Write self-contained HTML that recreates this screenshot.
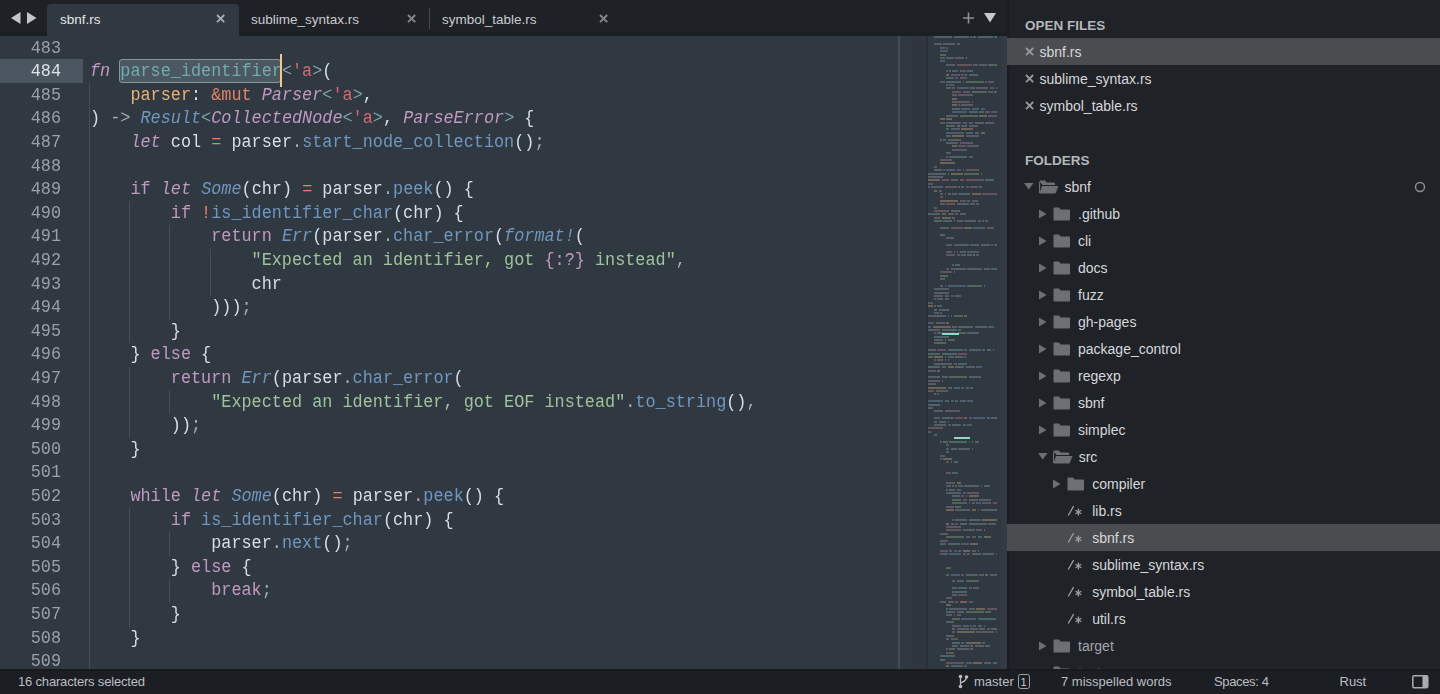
<!DOCTYPE html>
<html><head><meta charset="utf-8"><style>
*{box-sizing:border-box}
html,body{margin:0;padding:0}
body{width:1440px;height:694px;overflow:hidden;position:relative;background:#1f2227;font-family:"Liberation Sans",sans-serif}
.a{position:absolute}
.t{position:absolute;white-space:pre;line-height:20px}
#tabbar{position:absolute;left:0;top:0;width:1007px;height:36px;background:#1e2126}
#editor{position:absolute;left:0;top:36px;width:1007px;height:633px;background:#303841;overflow:hidden}
.ln{position:absolute;left:0;width:61px;text-align:right;font-family:"Liberation Mono",monospace;white-space:pre;transform:scaleY(1.06);transform-origin:0 16.3px}
.cl{position:absolute;white-space:pre;font-family:"Liberation Mono",monospace;color:#d8dee9;transform:scaleY(1.06);transform-origin:0 16.3px}
.cl i{font-style:italic}
.ig{position:absolute;width:1px;background:#454e58}
#sidebar{position:absolute;left:1007px;top:0;width:433px;height:669px;background:#1f2227;overflow:hidden}
.sb{position:absolute;white-space:pre;font-size:14px;line-height:20px;color:#d6d8db}
.mm{position:absolute;height:1.5px;opacity:.42}
#status{position:absolute;left:0;top:669px;width:1440px;height:25px;background:#1b1e22;color:#bcbfc3;font-size:13px}
</style></head><body>

<div id="tabbar">
<svg class="a" style="left:0;top:0" width="47" height="35"><path d="M20.5 12 L11 18 L20.5 24Z" fill="#c3c6ca"/><path d="M27 12 L36.5 18 L27 24Z" fill="#c3c6ca"/></svg>
<div class="a" style="left:0;top:32px;width:1007px;height:4px;background:#1a1f22"></div>
<div class="a" style="left:47px;top:4px;width:192px;height:32px;background:#303841;border-radius:4px 4px 0 0"></div>
<div class="t" style="left:60px;top:10px;font-size:13.5px;color:#e4e6e9">sbnf.rs</div>
<svg class="a" style="left:216.4px;top:13.9px" width="9" height="9"><path d="M1 1 L8.2 8.2 M8.2 1 L1 8.2" stroke="#a9acb0" stroke-width="1.9" fill="none"/></svg>
<div class="t" style="left:251px;top:10px;font-size:13.5px;color:#c9ccd0">sublime_syntax.rs</div>
<svg class="a" style="left:407.4px;top:13.9px" width="9" height="9"><path d="M1 1 L8.2 8.2 M8.2 1 L1 8.2" stroke="#84878c" stroke-width="1.9" fill="none"/></svg>
<div class="a" style="left:429px;top:8px;width:1.3px;height:21px;background:#45494f"></div>
<div class="t" style="left:442px;top:10px;font-size:13.5px;color:#c9ccd0">symbol_table.rs</div>
<svg class="a" style="left:598.9px;top:13.9px" width="9" height="9"><path d="M1 1 L8.2 8.2 M8.2 1 L1 8.2" stroke="#84878c" stroke-width="1.9" fill="none"/></svg>
<svg class="a" style="left:962px;top:12px" width="13" height="12"><path d="M6.5 0.5 V11.5 M1 6 H12" stroke="#8c8f94" stroke-width="1.6" fill="none"/></svg>
<svg class="a" style="left:984px;top:13px" width="12" height="10"><path d="M0 0 H12 L6 9.5Z" fill="#c6c9cd"/></svg>
</div>
<div id="editor">
<div class="a" style="left:0;top:23.10px;width:83px;height:23.60px;background:#4b5661"></div>
<div class="ln" style="top:0.60px;height:23.60px;line-height:23.60px;font-size:16.83px;color:#99a0a8">483</div>
<div class="ln" style="top:24.20px;height:23.60px;line-height:23.60px;font-size:16.83px;color:#dfe3ea">484</div>
<div class="ln" style="top:47.80px;height:23.60px;line-height:23.60px;font-size:16.83px;color:#99a0a8">485</div>
<div class="ig" style="left:88.5px;top:47.30px;height:24.20px"></div>
<div class="ln" style="top:71.40px;height:23.60px;line-height:23.60px;font-size:16.83px;color:#99a0a8">486</div>
<div class="ig" style="left:88.5px;top:70.90px;height:24.20px"></div>
<div class="ln" style="top:95.00px;height:23.60px;line-height:23.60px;font-size:16.83px;color:#99a0a8">487</div>
<div class="ig" style="left:88.5px;top:94.50px;height:24.20px"></div>
<div class="ln" style="top:118.60px;height:23.60px;line-height:23.60px;font-size:16.83px;color:#99a0a8">488</div>
<div class="ig" style="left:88.5px;top:118.10px;height:24.20px"></div>
<div class="ln" style="top:142.20px;height:23.60px;line-height:23.60px;font-size:16.83px;color:#99a0a8">489</div>
<div class="ig" style="left:88.5px;top:141.70px;height:24.20px"></div>
<div class="ln" style="top:165.80px;height:23.60px;line-height:23.60px;font-size:16.83px;color:#99a0a8">490</div>
<div class="ig" style="left:88.5px;top:165.30px;height:24.20px"></div>
<div class="ig" style="left:128.9px;top:165.30px;height:24.20px"></div>
<div class="ln" style="top:189.40px;height:23.60px;line-height:23.60px;font-size:16.83px;color:#99a0a8">491</div>
<div class="ig" style="left:88.5px;top:188.90px;height:24.20px"></div>
<div class="ig" style="left:128.9px;top:188.90px;height:24.20px"></div>
<div class="ig" style="left:169.3px;top:188.90px;height:24.20px"></div>
<div class="ln" style="top:213.00px;height:23.60px;line-height:23.60px;font-size:16.83px;color:#99a0a8">492</div>
<div class="ig" style="left:88.5px;top:212.50px;height:24.20px"></div>
<div class="ig" style="left:128.9px;top:212.50px;height:24.20px"></div>
<div class="ig" style="left:169.3px;top:212.50px;height:24.20px"></div>
<div class="ig" style="left:209.7px;top:212.50px;height:24.20px"></div>
<div class="ln" style="top:236.60px;height:23.60px;line-height:23.60px;font-size:16.83px;color:#99a0a8">493</div>
<div class="ig" style="left:88.5px;top:236.10px;height:24.20px"></div>
<div class="ig" style="left:128.9px;top:236.10px;height:24.20px"></div>
<div class="ig" style="left:169.3px;top:236.10px;height:24.20px"></div>
<div class="ig" style="left:209.7px;top:236.10px;height:24.20px"></div>
<div class="ln" style="top:260.20px;height:23.60px;line-height:23.60px;font-size:16.83px;color:#99a0a8">494</div>
<div class="ig" style="left:88.5px;top:259.70px;height:24.20px"></div>
<div class="ig" style="left:128.9px;top:259.70px;height:24.20px"></div>
<div class="ig" style="left:169.3px;top:259.70px;height:24.20px"></div>
<div class="ln" style="top:283.80px;height:23.60px;line-height:23.60px;font-size:16.83px;color:#99a0a8">495</div>
<div class="ig" style="left:88.5px;top:283.30px;height:24.20px"></div>
<div class="ig" style="left:128.9px;top:283.30px;height:24.20px"></div>
<div class="ln" style="top:307.40px;height:23.60px;line-height:23.60px;font-size:16.83px;color:#99a0a8">496</div>
<div class="ig" style="left:88.5px;top:306.90px;height:24.20px"></div>
<div class="ln" style="top:331.00px;height:23.60px;line-height:23.60px;font-size:16.83px;color:#99a0a8">497</div>
<div class="ig" style="left:88.5px;top:330.50px;height:24.20px"></div>
<div class="ig" style="left:128.9px;top:330.50px;height:24.20px"></div>
<div class="ln" style="top:354.60px;height:23.60px;line-height:23.60px;font-size:16.83px;color:#99a0a8">498</div>
<div class="ig" style="left:88.5px;top:354.10px;height:24.20px"></div>
<div class="ig" style="left:128.9px;top:354.10px;height:24.20px"></div>
<div class="ig" style="left:169.3px;top:354.10px;height:24.20px"></div>
<div class="ln" style="top:378.20px;height:23.60px;line-height:23.60px;font-size:16.83px;color:#99a0a8">499</div>
<div class="ig" style="left:88.5px;top:377.70px;height:24.20px"></div>
<div class="ig" style="left:128.9px;top:377.70px;height:24.20px"></div>
<div class="ln" style="top:401.80px;height:23.60px;line-height:23.60px;font-size:16.83px;color:#99a0a8">500</div>
<div class="ig" style="left:88.5px;top:401.30px;height:24.20px"></div>
<div class="ln" style="top:425.40px;height:23.60px;line-height:23.60px;font-size:16.83px;color:#99a0a8">501</div>
<div class="ig" style="left:88.5px;top:424.90px;height:24.20px"></div>
<div class="ln" style="top:449.00px;height:23.60px;line-height:23.60px;font-size:16.83px;color:#99a0a8">502</div>
<div class="ig" style="left:88.5px;top:448.50px;height:24.20px"></div>
<div class="ln" style="top:472.60px;height:23.60px;line-height:23.60px;font-size:16.83px;color:#99a0a8">503</div>
<div class="ig" style="left:88.5px;top:472.10px;height:24.20px"></div>
<div class="ig" style="left:128.9px;top:472.10px;height:24.20px"></div>
<div class="ln" style="top:496.20px;height:23.60px;line-height:23.60px;font-size:16.83px;color:#99a0a8">504</div>
<div class="ig" style="left:88.5px;top:495.70px;height:24.20px"></div>
<div class="ig" style="left:128.9px;top:495.70px;height:24.20px"></div>
<div class="ig" style="left:169.3px;top:495.70px;height:24.20px"></div>
<div class="ln" style="top:519.80px;height:23.60px;line-height:23.60px;font-size:16.83px;color:#99a0a8">505</div>
<div class="ig" style="left:88.5px;top:519.30px;height:24.20px"></div>
<div class="ig" style="left:128.9px;top:519.30px;height:24.20px"></div>
<div class="ln" style="top:543.40px;height:23.60px;line-height:23.60px;font-size:16.83px;color:#99a0a8">506</div>
<div class="ig" style="left:88.5px;top:542.90px;height:24.20px"></div>
<div class="ig" style="left:128.9px;top:542.90px;height:24.20px"></div>
<div class="ig" style="left:169.3px;top:542.90px;height:24.20px"></div>
<div class="ln" style="top:567.00px;height:23.60px;line-height:23.60px;font-size:16.83px;color:#99a0a8">507</div>
<div class="ig" style="left:88.5px;top:566.50px;height:24.20px"></div>
<div class="ig" style="left:128.9px;top:566.50px;height:24.20px"></div>
<div class="ln" style="top:590.60px;height:23.60px;line-height:23.60px;font-size:16.83px;color:#99a0a8">508</div>
<div class="ig" style="left:88.5px;top:590.10px;height:24.20px"></div>
<div class="ln" style="top:614.20px;height:23.60px;line-height:23.60px;font-size:16.83px;color:#99a0a8">509</div>
<div class="ig" style="left:88.5px;top:613.70px;height:24.20px"></div>
<div class="a" style="left:119px;top:22.5px;width:162px;height:24px;background:#4c5761;border:1px solid #84999d;border-radius:3px"></div>
<div class="cl" style="left:90px;top:0.60px;height:23.60px;line-height:23.60px;font-size:16.83px"></div>
<div class="cl" style="left:90px;top:24.20px;height:23.60px;line-height:23.60px;font-size:16.83px"><i style="color:#c099c0">fn</i> <span style="color:#6caeae">parse_identifier</span><span style="color:#7ba5a7">&lt;</span><span style="color:#d6686e">&#x27;a</span><span style="color:#7ba5a7">&gt;</span>(</div>
<div class="cl" style="left:90px;top:47.80px;height:23.60px;line-height:23.60px;font-size:16.83px">    <span style="color:#ebb16e">parser</span>: <span style="color:#e58267">&amp;mut</span> <i style="color:#c099c0">Parser</i><span style="color:#7ba5a7">&lt;</span><span style="color:#d6686e">&#x27;a</span><span style="color:#7ba5a7">&gt;</span>,</div>
<div class="cl" style="left:90px;top:71.40px;height:23.60px;line-height:23.60px;font-size:16.83px">) <span style="color:#a6acb9">-&gt;</span> <i style="color:#6f97bf">Result</i><span style="color:#7ba5a7">&lt;</span><i style="color:#c099c0">CollectedNode</i><span style="color:#7ba5a7">&lt;</span><span style="color:#d6686e">&#x27;a</span><span style="color:#7ba5a7">&gt;</span>, <i style="color:#c099c0">ParseError</i><span style="color:#7ba5a7">&gt;</span> {</div>
<div class="cl" style="left:90px;top:95.00px;height:23.60px;line-height:23.60px;font-size:16.83px">    <i style="color:#c099c0">let</i> col <span style="color:#e58267">=</span> parser<span style="color:#a6acb9">.</span><span style="color:#6f97bf">start_node_collection</span>()<span style="color:#a6acb9">;</span></div>
<div class="cl" style="left:90px;top:118.60px;height:23.60px;line-height:23.60px;font-size:16.83px"></div>
<div class="cl" style="left:90px;top:142.20px;height:23.60px;line-height:23.60px;font-size:16.83px">    <span style="color:#c099c0">if</span> <i style="color:#c099c0">let</i> <i style="color:#6f97bf">Some</i>(chr) <span style="color:#e58267">=</span> parser<span style="color:#a6acb9">.</span><span style="color:#6f97bf">peek</span>() {</div>
<div class="cl" style="left:90px;top:165.80px;height:23.60px;line-height:23.60px;font-size:16.83px">        <span style="color:#c099c0">if</span> <span style="color:#e58267">!</span><span style="color:#6f97bf">is_identifier_char</span>(chr) {</div>
<div class="cl" style="left:90px;top:189.40px;height:23.60px;line-height:23.60px;font-size:16.83px">            <span style="color:#c099c0">return</span> <i style="color:#6f97bf">Err</i>(parser<span style="color:#a6acb9">.</span><span style="color:#6f97bf">char_error</span>(<i style="color:#6f97bf">format!</i>(</div>
<div class="cl" style="left:90px;top:213.00px;height:23.60px;line-height:23.60px;font-size:16.83px">                <span style="color:#9fc39b">&quot;Expected an identifier, got </span><span style="color:#c099c0">{:?}</span><span style="color:#9fc39b"> instead&quot;</span><span style="color:#a6acb9">,</span></div>
<div class="cl" style="left:90px;top:236.60px;height:23.60px;line-height:23.60px;font-size:16.83px">                chr</div>
<div class="cl" style="left:90px;top:260.20px;height:23.60px;line-height:23.60px;font-size:16.83px">            )))<span style="color:#a6acb9">;</span></div>
<div class="cl" style="left:90px;top:283.80px;height:23.60px;line-height:23.60px;font-size:16.83px">        }</div>
<div class="cl" style="left:90px;top:307.40px;height:23.60px;line-height:23.60px;font-size:16.83px">    } <span style="color:#c099c0">else</span> {</div>
<div class="cl" style="left:90px;top:331.00px;height:23.60px;line-height:23.60px;font-size:16.83px">        <span style="color:#c099c0">return</span> <i style="color:#6f97bf">Err</i>(parser<span style="color:#a6acb9">.</span><span style="color:#6f97bf">char_error</span>(</div>
<div class="cl" style="left:90px;top:354.60px;height:23.60px;line-height:23.60px;font-size:16.83px">            <span style="color:#9fc39b">&quot;Expected an identifier, got EOF instead&quot;</span><span style="color:#a6acb9">.</span><span style="color:#6f97bf">to_string</span>()<span style="color:#a6acb9">,</span></div>
<div class="cl" style="left:90px;top:378.20px;height:23.60px;line-height:23.60px;font-size:16.83px">        ))<span style="color:#a6acb9">;</span></div>
<div class="cl" style="left:90px;top:401.80px;height:23.60px;line-height:23.60px;font-size:16.83px">    }</div>
<div class="cl" style="left:90px;top:425.40px;height:23.60px;line-height:23.60px;font-size:16.83px"></div>
<div class="cl" style="left:90px;top:449.00px;height:23.60px;line-height:23.60px;font-size:16.83px">    <span style="color:#c099c0">while</span> <i style="color:#c099c0">let</i> <i style="color:#6f97bf">Some</i>(chr) <span style="color:#e58267">=</span> parser<span style="color:#a6acb9">.</span><span style="color:#6f97bf">peek</span>() {</div>
<div class="cl" style="left:90px;top:472.60px;height:23.60px;line-height:23.60px;font-size:16.83px">        <span style="color:#c099c0">if</span> <span style="color:#6f97bf">is_identifier_char</span>(chr) {</div>
<div class="cl" style="left:90px;top:496.20px;height:23.60px;line-height:23.60px;font-size:16.83px">            parser<span style="color:#a6acb9">.</span><span style="color:#6f97bf">next</span>()<span style="color:#a6acb9">;</span></div>
<div class="cl" style="left:90px;top:519.80px;height:23.60px;line-height:23.60px;font-size:16.83px">        } <span style="color:#c099c0">else</span> {</div>
<div class="cl" style="left:90px;top:543.40px;height:23.60px;line-height:23.60px;font-size:16.83px">            <span style="color:#c099c0">break</span><span style="color:#a6acb9">;</span></div>
<div class="cl" style="left:90px;top:567.00px;height:23.60px;line-height:23.60px;font-size:16.83px">        }</div>
<div class="cl" style="left:90px;top:590.60px;height:23.60px;line-height:23.60px;font-size:16.83px">    }</div>
<div class="cl" style="left:90px;top:614.20px;height:23.60px;line-height:23.60px;font-size:16.83px"></div>
<div class="a" style="left:280.3px;top:18px;width:2.2px;height:32.5px;background:#f2c983"></div>
<div class="a" style="left:898px;top:0;width:2px;height:633px;background:#434c56"></div>
<div class="a" style="left:912px;top:0;width:14px;height:633px;background:#2f363f"></div>
<div class="a" style="left:926px;top:0;width:2px;height:633px;background:#2a3038"></div>
<div class="a" style="left:1001px;top:0;width:5.5px;height:633px;background:#343b44"></div>
<div class="a" style="left:0;top:0;width:1007px;height:633px;filter:blur(0.45px)"><div class="mm" style="left:934.0px;top:0px;width:18.0px;background:#8a939d"></div><div class="mm" style="left:953.5px;top:0px;width:15.0px;background:#8a939d"></div><div class="mm" style="left:970.0px;top:0px;width:1.5px;background:#8a939d"></div><div class="mm" style="left:973.0px;top:0px;width:3.0px;background:#6f8fb3"></div><div class="mm" style="left:977.5px;top:0px;width:15.0px;background:#8a939d"></div><div class="mm" style="left:994.0px;top:0px;width:3.0px;background:#6fa3a3"></div><div class="mm" style="left:934.0px;top:7px;width:7.5px;background:#8a939d"></div><div class="mm" style="left:943.0px;top:7px;width:12.0px;background:#8a939d"></div><div class="mm" style="left:956.5px;top:7px;width:3.0px;background:#8a939d"></div><div class="mm" style="left:940.0px;top:11px;width:4.5px;background:#8a939d"></div><div class="mm" style="left:946.0px;top:11px;width:1.5px;background:#8a939d"></div><div class="mm" style="left:940.0px;top:14px;width:7.5px;background:#6f8fb3"></div><div class="mm" style="left:940.0px;top:18px;width:6.0px;background:#88a884"></div><div class="mm" style="left:940.0px;top:21px;width:4.5px;background:#8a939d"></div><div class="mm" style="left:946.0px;top:21px;width:7.5px;background:#8a939d"></div><div class="mm" style="left:955.0px;top:21px;width:9.0px;background:#a17fa1"></div><div class="mm" style="left:965.5px;top:21px;width:1.5px;background:#c9a070"></div><div class="mm" style="left:940.0px;top:24px;width:4.5px;background:#6f8fb3"></div><div class="mm" style="left:946.0px;top:28px;width:9.0px;background:#8a939d"></div><div class="mm" style="left:956.5px;top:28px;width:15.0px;background:#b07a7e"></div><div class="mm" style="left:973.0px;top:28px;width:4.5px;background:#8a939d"></div><div class="mm" style="left:979.0px;top:28px;width:7.5px;background:#8a939d"></div><div class="mm" style="left:988.0px;top:28px;width:9.0px;background:#88a884"></div><div class="mm" style="left:946.0px;top:34px;width:1.5px;background:#b07a7e"></div><div class="mm" style="left:949.0px;top:34px;width:1.5px;background:#8a939d"></div><div class="mm" style="left:952.0px;top:34px;width:6.0px;background:#8a939d"></div><div class="mm" style="left:959.5px;top:34px;width:6.0px;background:#b07a7e"></div><div class="mm" style="left:967.0px;top:34px;width:6.0px;background:#6fa3a3"></div><div class="mm" style="left:946.0px;top:38px;width:3.0px;background:#c9a070"></div><div class="mm" style="left:950.5px;top:38px;width:9.0px;background:#a17fa1"></div><div class="mm" style="left:961.0px;top:38px;width:1.5px;background:#88a884"></div><div class="mm" style="left:964.0px;top:38px;width:3.0px;background:#8a939d"></div><div class="mm" style="left:968.5px;top:38px;width:9.0px;background:#6fa3a3"></div><div class="mm" style="left:946.0px;top:41px;width:7.5px;background:#6fa3a3"></div><div class="mm" style="left:955.0px;top:41px;width:3.0px;background:#a17fa1"></div><div class="mm" style="left:959.5px;top:41px;width:7.5px;background:#a17fa1"></div><div class="mm" style="left:940.0px;top:45px;width:4.5px;background:#a17fa1"></div><div class="mm" style="left:946.0px;top:45px;width:15.0px;background:#8a939d"></div><div class="mm" style="left:962.5px;top:45px;width:1.5px;background:#8a939d"></div><div class="mm" style="left:965.5px;top:45px;width:18.0px;background:#88a884"></div><div class="mm" style="left:985.0px;top:45px;width:1.5px;background:#8a939d"></div><div class="mm" style="left:988.0px;top:45px;width:6.0px;background:#a17fa1"></div><div class="mm" style="left:946.0px;top:48px;width:1.5px;background:#8a939d"></div><div class="mm" style="left:949.0px;top:48px;width:4.5px;background:#6f8fb3"></div><div class="mm" style="left:946.0px;top:51px;width:4.5px;background:#88a884"></div><div class="mm" style="left:952.0px;top:51px;width:3.0px;background:#8a939d"></div><div class="mm" style="left:956.5px;top:51px;width:12.0px;background:#6f8fb3"></div><div class="mm" style="left:970.0px;top:51px;width:4.5px;background:#8a939d"></div><div class="mm" style="left:976.0px;top:51px;width:12.0px;background:#a17fa1"></div><div class="mm" style="left:989.5px;top:51px;width:4.5px;background:#b07a7e"></div><div class="mm" style="left:995.5px;top:51px;width:1.5px;background:#6fa3a3"></div><div class="mm" style="left:952.0px;top:55px;width:9.0px;background:#b07a7e"></div><div class="mm" style="left:962.5px;top:55px;width:7.5px;background:#a17fa1"></div><div class="mm" style="left:971.5px;top:55px;width:15.0px;background:#88a884"></div><div class="mm" style="left:988.0px;top:55px;width:4.5px;background:#8a939d"></div><div class="mm" style="left:994.0px;top:55px;width:3.0px;background:#6fa3a3"></div><div class="mm" style="left:952.0px;top:58px;width:4.5px;background:#8a939d"></div><div class="mm" style="left:958.0px;top:58px;width:15.0px;background:#a17fa1"></div><div class="mm" style="left:952.0px;top:62px;width:4.5px;background:#c9a070"></div><div class="mm" style="left:952.0px;top:65px;width:18.0px;background:#a17fa1"></div><div class="mm" style="left:971.5px;top:65px;width:1.5px;background:#a17fa1"></div><div class="mm" style="left:952.0px;top:68px;width:4.5px;background:#c9a070"></div><div class="mm" style="left:958.0px;top:68px;width:1.5px;background:#b07a7e"></div><div class="mm" style="left:961.0px;top:68px;width:12.0px;background:#a17fa1"></div><div class="mm" style="left:952.0px;top:72px;width:7.5px;background:#6fa3a3"></div><div class="mm" style="left:961.0px;top:72px;width:9.0px;background:#6f8fb3"></div><div class="mm" style="left:971.5px;top:72px;width:7.5px;background:#6f8fb3"></div><div class="mm" style="left:980.5px;top:72px;width:4.5px;background:#6f8fb3"></div><div class="mm" style="left:952.0px;top:75px;width:15.0px;background:#6f8fb3"></div><div class="mm" style="left:968.5px;top:75px;width:9.0px;background:#6fa3a3"></div><div class="mm" style="left:979.0px;top:75px;width:4.5px;background:#6fa3a3"></div><div class="mm" style="left:985.0px;top:75px;width:4.5px;background:#8a939d"></div><div class="mm" style="left:991.0px;top:75px;width:6.0px;background:#b07a7e"></div><div class="mm" style="left:946.0px;top:79px;width:12.0px;background:#8a939d"></div><div class="mm" style="left:959.5px;top:79px;width:18.0px;background:#88a884"></div><div class="mm" style="left:979.0px;top:79px;width:7.5px;background:#c9a070"></div><div class="mm" style="left:988.0px;top:79px;width:9.0px;background:#a17fa1"></div><div class="mm" style="left:940.0px;top:82px;width:4.5px;background:#c9a070"></div><div class="mm" style="left:946.0px;top:82px;width:6.0px;background:#c9a070"></div><div class="mm" style="left:940.0px;top:86px;width:4.5px;background:#8a939d"></div><div class="mm" style="left:946.0px;top:86px;width:15.0px;background:#8a939d"></div><div class="mm" style="left:962.5px;top:86px;width:4.5px;background:#8a939d"></div><div class="mm" style="left:968.5px;top:86px;width:4.5px;background:#8a939d"></div><div class="mm" style="left:974.5px;top:86px;width:9.0px;background:#8a939d"></div><div class="mm" style="left:985.0px;top:86px;width:9.0px;background:#8a939d"></div><div class="mm" style="left:946.0px;top:89px;width:9.0px;background:#88a884"></div><div class="mm" style="left:956.5px;top:89px;width:3.0px;background:#c9a070"></div><div class="mm" style="left:961.0px;top:89px;width:6.0px;background:#8a939d"></div><div class="mm" style="left:968.5px;top:89px;width:9.0px;background:#8a939d"></div><div class="mm" style="left:946.0px;top:92px;width:3.0px;background:#6fa3a3"></div><div class="mm" style="left:950.5px;top:92px;width:9.0px;background:#8a939d"></div><div class="mm" style="left:961.0px;top:92px;width:12.0px;background:#c9a070"></div><div class="mm" style="left:946.0px;top:96px;width:18.0px;background:#6f8fb3"></div><div class="mm" style="left:965.5px;top:96px;width:7.5px;background:#6f8fb3"></div><div class="mm" style="left:974.5px;top:96px;width:4.5px;background:#88a884"></div><div class="mm" style="left:980.5px;top:96px;width:4.5px;background:#c9a070"></div><div class="mm" style="left:946.0px;top:99px;width:4.5px;background:#8a939d"></div><div class="mm" style="left:952.0px;top:99px;width:12.0px;background:#c9a070"></div><div class="mm" style="left:965.5px;top:99px;width:13.5px;background:#8a939d"></div><div class="mm" style="left:940.0px;top:103px;width:1.5px;background:#88a884"></div><div class="mm" style="left:943.0px;top:103px;width:3.0px;background:#6f8fb3"></div><div class="mm" style="left:947.5px;top:103px;width:13.5px;background:#8a939d"></div><div class="mm" style="left:946.0px;top:106px;width:12.0px;background:#8a939d"></div><div class="mm" style="left:959.5px;top:106px;width:13.5px;background:#a17fa1"></div><div class="mm" style="left:952.0px;top:109px;width:4.5px;background:#c9a070"></div><div class="mm" style="left:958.0px;top:109px;width:7.5px;background:#a17fa1"></div><div class="mm" style="left:967.0px;top:109px;width:12.0px;background:#a17fa1"></div><div class="mm" style="left:952.0px;top:113px;width:15.0px;background:#a17fa1"></div><div class="mm" style="left:946.0px;top:116px;width:4.5px;background:#8a939d"></div><div class="mm" style="left:946.0px;top:120px;width:1.5px;background:#b07a7e"></div><div class="mm" style="left:949.0px;top:120px;width:18.0px;background:#6fa3a3"></div><div class="mm" style="left:968.5px;top:120px;width:4.5px;background:#8a939d"></div><div class="mm" style="left:940.0px;top:123px;width:12.0px;background:#a17fa1"></div><div class="mm" style="left:940.0px;top:126px;width:15.0px;background:#c9a070"></div><div class="mm" style="left:934.0px;top:130px;width:3.0px;background:#a17fa1"></div><div class="mm" style="left:934.0px;top:133px;width:7.5px;background:#6fa3a3"></div><div class="mm" style="left:943.0px;top:133px;width:1.5px;background:#b07a7e"></div><div class="mm" style="left:946.0px;top:133px;width:9.0px;background:#6f8fb3"></div><div class="mm" style="left:956.5px;top:133px;width:4.5px;background:#8a939d"></div><div class="mm" style="left:962.5px;top:133px;width:1.5px;background:#a17fa1"></div><div class="mm" style="left:965.5px;top:133px;width:13.5px;background:#b07a7e"></div><div class="mm" style="left:928.0px;top:137px;width:18.0px;background:#8a939d"></div><div class="mm" style="left:947.5px;top:137px;width:1.5px;background:#88a884"></div><div class="mm" style="left:950.5px;top:137px;width:12.0px;background:#c9a070"></div><div class="mm" style="left:964.0px;top:137px;width:15.0px;background:#88a884"></div><div class="mm" style="left:980.5px;top:137px;width:1.5px;background:#88a884"></div><div class="mm" style="left:928.0px;top:140px;width:15.0px;background:#8a939d"></div><div class="mm" style="left:928.0px;top:143px;width:12.0px;background:#c9a070"></div><div class="mm" style="left:941.5px;top:143px;width:7.5px;background:#b07a7e"></div><div class="mm" style="left:950.5px;top:143px;width:7.5px;background:#8a939d"></div><div class="mm" style="left:959.5px;top:143px;width:4.5px;background:#b07a7e"></div><div class="mm" style="left:965.5px;top:143px;width:18.0px;background:#b07a7e"></div><div class="mm" style="left:985.0px;top:143px;width:9.0px;background:#6fa3a3"></div><div class="mm" style="left:928.0px;top:147px;width:4.5px;background:#a17fa1"></div><div class="mm" style="left:928.0px;top:150px;width:1.5px;background:#6f8fb3"></div><div class="mm" style="left:931.0px;top:150px;width:12.0px;background:#8a939d"></div><div class="mm" style="left:944.5px;top:150px;width:12.0px;background:#b07a7e"></div><div class="mm" style="left:958.0px;top:150px;width:1.5px;background:#8a939d"></div><div class="mm" style="left:961.0px;top:150px;width:3.0px;background:#8a939d"></div><div class="mm" style="left:965.5px;top:150px;width:3.0px;background:#8a939d"></div><div class="mm" style="left:970.0px;top:150px;width:7.5px;background:#b07a7e"></div><div class="mm" style="left:979.0px;top:150px;width:3.0px;background:#8a939d"></div><div class="mm" style="left:934.0px;top:154px;width:3.0px;background:#c9a070"></div><div class="mm" style="left:938.5px;top:154px;width:3.0px;background:#8a939d"></div><div class="mm" style="left:940.0px;top:157px;width:3.0px;background:#a17fa1"></div><div class="mm" style="left:944.5px;top:157px;width:1.5px;background:#c9a070"></div><div class="mm" style="left:947.5px;top:157px;width:3.0px;background:#88a884"></div><div class="mm" style="left:952.0px;top:157px;width:4.5px;background:#8a939d"></div><div class="mm" style="left:958.0px;top:157px;width:12.0px;background:#8a939d"></div><div class="mm" style="left:971.5px;top:157px;width:9.0px;background:#c9a070"></div><div class="mm" style="left:982.0px;top:157px;width:15.0px;background:#b07a7e"></div><div class="mm" style="left:940.0px;top:160px;width:3.0px;background:#a17fa1"></div><div class="mm" style="left:940.0px;top:164px;width:18.0px;background:#c9a070"></div><div class="mm" style="left:959.5px;top:164px;width:6.0px;background:#a17fa1"></div><div class="mm" style="left:967.0px;top:164px;width:3.0px;background:#6fa3a3"></div><div class="mm" style="left:971.5px;top:164px;width:6.0px;background:#a17fa1"></div><div class="mm" style="left:940.0px;top:167px;width:4.5px;background:#8a939d"></div><div class="mm" style="left:946.0px;top:167px;width:9.0px;background:#b07a7e"></div><div class="mm" style="left:956.5px;top:167px;width:12.0px;background:#8a939d"></div><div class="mm" style="left:970.0px;top:167px;width:4.5px;background:#8a939d"></div><div class="mm" style="left:976.0px;top:167px;width:3.0px;background:#8a939d"></div><div class="mm" style="left:934.0px;top:171px;width:3.0px;background:#6fa3a3"></div><div class="mm" style="left:934.0px;top:174px;width:15.0px;background:#b07a7e"></div><div class="mm" style="left:950.5px;top:174px;width:9.0px;background:#8a939d"></div><div class="mm" style="left:928.0px;top:177px;width:12.0px;background:#8a939d"></div><div class="mm" style="left:941.5px;top:177px;width:4.5px;background:#88a884"></div><div class="mm" style="left:947.5px;top:177px;width:6.0px;background:#8a939d"></div><div class="mm" style="left:955.0px;top:177px;width:3.0px;background:#b07a7e"></div><div class="mm" style="left:959.5px;top:177px;width:6.0px;background:#8a939d"></div><div class="mm" style="left:934.0px;top:181px;width:6.0px;background:#a17fa1"></div><div class="mm" style="left:941.5px;top:181px;width:9.0px;background:#c9a070"></div><div class="mm" style="left:952.0px;top:181px;width:3.0px;background:#88a884"></div><div class="mm" style="left:934.0px;top:184px;width:7.5px;background:#88a884"></div><div class="mm" style="left:943.0px;top:184px;width:9.0px;background:#6fa3a3"></div><div class="mm" style="left:953.5px;top:184px;width:1.5px;background:#c9a070"></div><div class="mm" style="left:956.5px;top:184px;width:6.0px;background:#8a939d"></div><div class="mm" style="left:964.0px;top:184px;width:12.0px;background:#8a939d"></div><div class="mm" style="left:977.5px;top:184px;width:3.0px;background:#8a939d"></div><div class="mm" style="left:982.0px;top:184px;width:1.5px;background:#8a939d"></div><div class="mm" style="left:985.0px;top:184px;width:3.0px;background:#8a939d"></div><div class="mm" style="left:940.0px;top:191px;width:9.0px;background:#8a939d"></div><div class="mm" style="left:950.5px;top:191px;width:12.0px;background:#b07a7e"></div><div class="mm" style="left:964.0px;top:191px;width:7.5px;background:#c9a070"></div><div class="mm" style="left:973.0px;top:191px;width:12.0px;background:#6f8fb3"></div><div class="mm" style="left:986.5px;top:191px;width:7.5px;background:#b07a7e"></div><div class="mm" style="left:940.0px;top:198px;width:4.5px;background:#88a884"></div><div class="mm" style="left:946.0px;top:201px;width:7.5px;background:#a17fa1"></div><div class="mm" style="left:946.0px;top:208px;width:6.0px;background:#8a939d"></div><div class="mm" style="left:953.5px;top:208px;width:15.0px;background:#8a939d"></div><div class="mm" style="left:970.0px;top:208px;width:9.0px;background:#6f8fb3"></div><div class="mm" style="left:980.5px;top:208px;width:9.0px;background:#8a939d"></div><div class="mm" style="left:991.0px;top:208px;width:1.5px;background:#b07a7e"></div><div class="mm" style="left:994.0px;top:208px;width:3.0px;background:#8a939d"></div><div class="mm" style="left:946.0px;top:215px;width:6.0px;background:#8a939d"></div><div class="mm" style="left:953.5px;top:215px;width:1.5px;background:#8a939d"></div><div class="mm" style="left:956.5px;top:215px;width:1.5px;background:#c9a070"></div><div class="mm" style="left:959.5px;top:215px;width:6.0px;background:#8a939d"></div><div class="mm" style="left:967.0px;top:215px;width:12.0px;background:#6f8fb3"></div><div class="mm" style="left:946.0px;top:218px;width:9.0px;background:#a17fa1"></div><div class="mm" style="left:956.5px;top:218px;width:3.0px;background:#b07a7e"></div><div class="mm" style="left:961.0px;top:218px;width:4.5px;background:#8a939d"></div><div class="mm" style="left:967.0px;top:218px;width:4.5px;background:#8a939d"></div><div class="mm" style="left:973.0px;top:218px;width:1.5px;background:#c9a070"></div><div class="mm" style="left:976.0px;top:218px;width:3.0px;background:#a17fa1"></div><div class="mm" style="left:952.0px;top:228px;width:1.5px;background:#8a939d"></div><div class="mm" style="left:955.0px;top:228px;width:4.5px;background:#6fa3a3"></div><div class="mm" style="left:946.0px;top:232px;width:3.0px;background:#8a939d"></div><div class="mm" style="left:950.5px;top:232px;width:15.0px;background:#8a939d"></div><div class="mm" style="left:967.0px;top:232px;width:15.0px;background:#8a939d"></div><div class="mm" style="left:983.5px;top:232px;width:6.0px;background:#8a939d"></div><div class="mm" style="left:991.0px;top:232px;width:6.0px;background:#88a884"></div><div class="mm" style="left:940.0px;top:235px;width:12.0px;background:#b07a7e"></div><div class="mm" style="left:953.5px;top:235px;width:1.5px;background:#8a939d"></div><div class="mm" style="left:940.0px;top:239px;width:7.5px;background:#88a884"></div><div class="mm" style="left:940.0px;top:242px;width:4.5px;background:#8a939d"></div><div class="mm" style="left:940.0px;top:249px;width:3.0px;background:#8a939d"></div><div class="mm" style="left:944.5px;top:249px;width:1.5px;background:#b07a7e"></div><div class="mm" style="left:947.5px;top:249px;width:18.0px;background:#6f8fb3"></div><div class="mm" style="left:967.0px;top:249px;width:15.0px;background:#88a884"></div><div class="mm" style="left:983.5px;top:249px;width:1.5px;background:#6fa3a3"></div><div class="mm" style="left:934.0px;top:252px;width:15.0px;background:#8a939d"></div><div class="mm" style="left:934.0px;top:256px;width:15.0px;background:#8a939d"></div><div class="mm" style="left:934.0px;top:259px;width:9.0px;background:#8a939d"></div><div class="mm" style="left:944.5px;top:259px;width:4.5px;background:#6fa3a3"></div><div class="mm" style="left:950.5px;top:259px;width:3.0px;background:#b07a7e"></div><div class="mm" style="left:955.0px;top:259px;width:6.0px;background:#8a939d"></div><div class="mm" style="left:934.0px;top:262px;width:1.5px;background:#b07a7e"></div><div class="mm" style="left:937.0px;top:262px;width:6.0px;background:#8a939d"></div><div class="mm" style="left:944.5px;top:262px;width:4.5px;background:#a17fa1"></div><div class="mm" style="left:928.0px;top:266px;width:4.5px;background:#6f8fb3"></div><div class="mm" style="left:928.0px;top:269px;width:4.5px;background:#c9a070"></div><div class="mm" style="left:934.0px;top:269px;width:1.5px;background:#b07a7e"></div><div class="mm" style="left:937.0px;top:269px;width:4.5px;background:#8a939d"></div><div class="mm" style="left:934.0px;top:273px;width:3.0px;background:#88a884"></div><div class="mm" style="left:938.5px;top:273px;width:10.5px;background:#8a939d"></div><div class="mm" style="left:934.0px;top:276px;width:4.5px;background:#a17fa1"></div><div class="mm" style="left:940.0px;top:276px;width:1.5px;background:#6f8fb3"></div><div class="mm" style="left:928.0px;top:279px;width:18.0px;background:#8a939d"></div><div class="mm" style="left:947.5px;top:279px;width:1.5px;background:#8a939d"></div><div class="mm" style="left:950.5px;top:279px;width:1.5px;background:#8a939d"></div><div class="mm" style="left:953.5px;top:279px;width:9.0px;background:#88a884"></div><div class="mm" style="left:964.0px;top:279px;width:3.0px;background:#c9a070"></div><div class="mm" style="left:928.0px;top:286px;width:6.0px;background:#6f8fb3"></div><div class="mm" style="left:935.5px;top:286px;width:9.0px;background:#8a939d"></div><div class="mm" style="left:946.0px;top:286px;width:3.0px;background:#c9a070"></div><div class="mm" style="left:928.0px;top:290px;width:3.0px;background:#a17fa1"></div><div class="mm" style="left:932.5px;top:290px;width:18.0px;background:#c9a070"></div><div class="mm" style="left:952.0px;top:290px;width:4.5px;background:#8a939d"></div><div class="mm" style="left:958.0px;top:290px;width:15.0px;background:#88a884"></div><div class="mm" style="left:974.5px;top:290px;width:12.0px;background:#8a939d"></div><div class="mm" style="left:988.0px;top:290px;width:6.0px;background:#6f8fb3"></div><div class="mm" style="left:928.0px;top:293px;width:12.0px;background:#8a939d"></div><div class="mm" style="left:941.5px;top:293px;width:15.0px;background:#8a939d"></div><div class="mm" style="left:958.0px;top:293px;width:3.0px;background:#6fa3a3"></div><div class="mm" style="left:934.0px;top:296px;width:1.5px;background:#8a939d"></div><div class="mm" style="left:937.0px;top:296px;width:4.5px;background:#88a884"></div><div class="mm" style="left:943.0px;top:296px;width:1.5px;background:#8a939d"></div><div class="mm" style="left:946.0px;top:296px;width:1.5px;background:#8a939d"></div><div class="mm" style="left:949.0px;top:296px;width:6.0px;background:#b07a7e"></div><div class="mm" style="left:956.5px;top:296px;width:9.0px;background:#88a884"></div><div class="mm" style="left:967.0px;top:296px;width:12.0px;background:#8a939d"></div><div class="mm" style="left:934.0px;top:300px;width:15.0px;background:#6fa3a3"></div><div class="mm" style="left:934.0px;top:303px;width:9.0px;background:#8a939d"></div><div class="mm" style="left:944.5px;top:303px;width:1.5px;background:#c9a070"></div><div class="mm" style="left:947.5px;top:303px;width:7.5px;background:#88a884"></div><div class="mm" style="left:934.0px;top:306px;width:12.0px;background:#88a884"></div><div class="mm" style="left:928.0px;top:313px;width:7.5px;background:#8a939d"></div><div class="mm" style="left:937.0px;top:313px;width:9.0px;background:#b07a7e"></div><div class="mm" style="left:947.5px;top:313px;width:15.0px;background:#6fa3a3"></div><div class="mm" style="left:964.0px;top:313px;width:3.0px;background:#8a939d"></div><div class="mm" style="left:968.5px;top:313px;width:12.0px;background:#8a939d"></div><div class="mm" style="left:982.0px;top:313px;width:3.0px;background:#6fa3a3"></div><div class="mm" style="left:986.5px;top:313px;width:4.5px;background:#88a884"></div><div class="mm" style="left:992.5px;top:313px;width:1.5px;background:#6f8fb3"></div><div class="mm" style="left:928.0px;top:317px;width:12.0px;background:#6fa3a3"></div><div class="mm" style="left:941.5px;top:317px;width:15.0px;background:#6fa3a3"></div><div class="mm" style="left:958.0px;top:317px;width:9.0px;background:#b07a7e"></div><div class="mm" style="left:928.0px;top:320px;width:4.5px;background:#88a884"></div><div class="mm" style="left:934.0px;top:320px;width:9.0px;background:#c9a070"></div><div class="mm" style="left:944.5px;top:320px;width:1.5px;background:#6fa3a3"></div><div class="mm" style="left:947.5px;top:320px;width:6.0px;background:#a17fa1"></div><div class="mm" style="left:955.0px;top:320px;width:7.5px;background:#8a939d"></div><div class="mm" style="left:964.0px;top:320px;width:1.5px;background:#8a939d"></div><div class="mm" style="left:934.0px;top:323px;width:1.5px;background:#a17fa1"></div><div class="mm" style="left:937.0px;top:323px;width:6.0px;background:#8a939d"></div><div class="mm" style="left:944.5px;top:323px;width:1.5px;background:#8a939d"></div><div class="mm" style="left:947.5px;top:323px;width:1.5px;background:#6f8fb3"></div><div class="mm" style="left:934.0px;top:327px;width:18.0px;background:#8a939d"></div><div class="mm" style="left:953.5px;top:327px;width:3.0px;background:#8a939d"></div><div class="mm" style="left:958.0px;top:327px;width:9.0px;background:#6fa3a3"></div><div class="mm" style="left:928.0px;top:330px;width:12.0px;background:#88a884"></div><div class="mm" style="left:941.5px;top:330px;width:4.5px;background:#6fa3a3"></div><div class="mm" style="left:947.5px;top:330px;width:6.0px;background:#c9a070"></div><div class="mm" style="left:955.0px;top:330px;width:9.0px;background:#88a884"></div><div class="mm" style="left:965.5px;top:330px;width:9.0px;background:#8a939d"></div><div class="mm" style="left:976.0px;top:330px;width:6.0px;background:#6f8fb3"></div><div class="mm" style="left:928.0px;top:334px;width:7.5px;background:#a17fa1"></div><div class="mm" style="left:937.0px;top:334px;width:3.0px;background:#c9a070"></div><div class="mm" style="left:928.0px;top:340px;width:12.0px;background:#8a939d"></div><div class="mm" style="left:941.5px;top:340px;width:6.0px;background:#8a939d"></div><div class="mm" style="left:949.0px;top:340px;width:18.0px;background:#88a884"></div><div class="mm" style="left:968.5px;top:340px;width:12.0px;background:#8a939d"></div><div class="mm" style="left:928.0px;top:344px;width:12.0px;background:#a17fa1"></div><div class="mm" style="left:941.5px;top:344px;width:1.5px;background:#c9a070"></div><div class="mm" style="left:928.0px;top:347px;width:7.5px;background:#8a939d"></div><div class="mm" style="left:928.0px;top:351px;width:18.0px;background:#c9a070"></div><div class="mm" style="left:947.5px;top:351px;width:4.5px;background:#88a884"></div><div class="mm" style="left:953.5px;top:351px;width:6.0px;background:#6f8fb3"></div><div class="mm" style="left:961.0px;top:351px;width:3.0px;background:#6f8fb3"></div><div class="mm" style="left:965.5px;top:351px;width:3.0px;background:#8a939d"></div><div class="mm" style="left:970.0px;top:351px;width:3.0px;background:#8a939d"></div><div class="mm" style="left:928.0px;top:354px;width:6.0px;background:#b07a7e"></div><div class="mm" style="left:935.5px;top:354px;width:12.0px;background:#8a939d"></div><div class="mm" style="left:934.0px;top:357px;width:1.5px;background:#8a939d"></div><div class="mm" style="left:937.0px;top:357px;width:1.5px;background:#8a939d"></div><div class="mm" style="left:928.0px;top:364px;width:15.0px;background:#6f8fb3"></div><div class="mm" style="left:944.5px;top:364px;width:4.5px;background:#6fa3a3"></div><div class="mm" style="left:950.5px;top:364px;width:3.0px;background:#6f8fb3"></div><div class="mm" style="left:955.0px;top:364px;width:3.0px;background:#8a939d"></div><div class="mm" style="left:959.5px;top:364px;width:6.0px;background:#8a939d"></div><div class="mm" style="left:967.0px;top:364px;width:6.0px;background:#6f8fb3"></div><div class="mm" style="left:928.0px;top:368px;width:12.0px;background:#6fa3a3"></div><div class="mm" style="left:928.0px;top:371px;width:4.5px;background:#8a939d"></div><div class="mm" style="left:934.0px;top:374px;width:9.0px;background:#8a939d"></div><div class="mm" style="left:944.5px;top:374px;width:15.0px;background:#a17fa1"></div><div class="mm" style="left:934.0px;top:381px;width:6.0px;background:#6f8fb3"></div><div class="mm" style="left:941.5px;top:381px;width:12.0px;background:#8a939d"></div><div class="mm" style="left:955.0px;top:381px;width:7.5px;background:#b07a7e"></div><div class="mm" style="left:964.0px;top:381px;width:3.0px;background:#c9a070"></div><div class="mm" style="left:968.5px;top:381px;width:3.0px;background:#a17fa1"></div><div class="mm" style="left:973.0px;top:381px;width:12.0px;background:#6f8fb3"></div><div class="mm" style="left:986.5px;top:381px;width:3.0px;background:#6fa3a3"></div><div class="mm" style="left:991.0px;top:381px;width:6.0px;background:#8a939d"></div><div class="mm" style="left:934.0px;top:385px;width:3.0px;background:#8a939d"></div><div class="mm" style="left:938.5px;top:385px;width:7.5px;background:#8a939d"></div><div class="mm" style="left:947.5px;top:385px;width:1.5px;background:#b07a7e"></div><div class="mm" style="left:934.0px;top:388px;width:12.0px;background:#8a939d"></div><div class="mm" style="left:947.5px;top:388px;width:3.0px;background:#b07a7e"></div><div class="mm" style="left:952.0px;top:388px;width:9.0px;background:#8a939d"></div><div class="mm" style="left:962.5px;top:388px;width:3.0px;background:#8a939d"></div><div class="mm" style="left:967.0px;top:388px;width:4.5px;background:#6f8fb3"></div><div class="mm" style="left:928.0px;top:391px;width:15.0px;background:#b07a7e"></div><div class="mm" style="left:928.0px;top:395px;width:3.0px;background:#8a939d"></div><div class="mm" style="left:934.0px;top:398px;width:3.0px;background:#6fa3a3"></div><div class="mm" style="left:940.0px;top:405px;width:1.5px;background:#8a939d"></div><div class="mm" style="left:943.0px;top:405px;width:4.5px;background:#88a884"></div><div class="mm" style="left:949.0px;top:405px;width:18.0px;background:#88a884"></div><div class="mm" style="left:968.5px;top:405px;width:1.5px;background:#8a939d"></div><div class="mm" style="left:971.5px;top:405px;width:1.5px;background:#88a884"></div><div class="mm" style="left:974.5px;top:405px;width:4.5px;background:#88a884"></div><div class="mm" style="left:946.0px;top:408px;width:3.0px;background:#6f8fb3"></div><div class="mm" style="left:946.0px;top:412px;width:3.0px;background:#6f8fb3"></div><div class="mm" style="left:950.5px;top:412px;width:6.0px;background:#88a884"></div><div class="mm" style="left:958.0px;top:412px;width:12.0px;background:#8a939d"></div><div class="mm" style="left:971.5px;top:412px;width:1.5px;background:#8a939d"></div><div class="mm" style="left:946.0px;top:415px;width:3.0px;background:#8a939d"></div><div class="mm" style="left:940.0px;top:419px;width:4.5px;background:#8a939d"></div><div class="mm" style="left:940.0px;top:422px;width:1.5px;background:#b07a7e"></div><div class="mm" style="left:943.0px;top:422px;width:9.0px;background:#c9a070"></div><div class="mm" style="left:946.0px;top:425px;width:3.0px;background:#6f8fb3"></div><div class="mm" style="left:950.5px;top:425px;width:1.5px;background:#8a939d"></div><div class="mm" style="left:953.5px;top:425px;width:4.5px;background:#88a884"></div><div class="mm" style="left:946.0px;top:436px;width:4.5px;background:#a17fa1"></div><div class="mm" style="left:952.0px;top:436px;width:6.0px;background:#6fa3a3"></div><div class="mm" style="left:946.0px;top:446px;width:9.0px;background:#b07a7e"></div><div class="mm" style="left:956.5px;top:446px;width:4.5px;background:#c9a070"></div><div class="mm" style="left:946.0px;top:449px;width:4.5px;background:#a17fa1"></div><div class="mm" style="left:952.0px;top:449px;width:1.5px;background:#6fa3a3"></div><div class="mm" style="left:955.0px;top:449px;width:1.5px;background:#88a884"></div><div class="mm" style="left:958.0px;top:449px;width:4.5px;background:#8a939d"></div><div class="mm" style="left:964.0px;top:449px;width:15.0px;background:#8a939d"></div><div class="mm" style="left:980.5px;top:449px;width:1.5px;background:#8a939d"></div><div class="mm" style="left:983.5px;top:449px;width:6.0px;background:#88a884"></div><div class="mm" style="left:946.0px;top:453px;width:1.5px;background:#6fa3a3"></div><div class="mm" style="left:949.0px;top:453px;width:6.0px;background:#8a939d"></div><div class="mm" style="left:956.5px;top:453px;width:4.5px;background:#6f8fb3"></div><div class="mm" style="left:946.0px;top:456px;width:15.0px;background:#8a939d"></div><div class="mm" style="left:962.5px;top:456px;width:3.0px;background:#6f8fb3"></div><div class="mm" style="left:967.0px;top:456px;width:12.0px;background:#a17fa1"></div><div class="mm" style="left:952.0px;top:459px;width:7.5px;background:#8a939d"></div><div class="mm" style="left:961.0px;top:459px;width:3.0px;background:#b07a7e"></div><div class="mm" style="left:965.5px;top:459px;width:1.5px;background:#8a939d"></div><div class="mm" style="left:968.5px;top:459px;width:10.5px;background:#c9a070"></div><div class="mm" style="left:952.0px;top:463px;width:9.0px;background:#88a884"></div><div class="mm" style="left:962.5px;top:463px;width:4.5px;background:#b07a7e"></div><div class="mm" style="left:968.5px;top:463px;width:9.0px;background:#8a939d"></div><div class="mm" style="left:979.0px;top:463px;width:12.0px;background:#8a939d"></div><div class="mm" style="left:952.0px;top:466px;width:15.0px;background:#8a939d"></div><div class="mm" style="left:968.5px;top:466px;width:1.5px;background:#8a939d"></div><div class="mm" style="left:971.5px;top:466px;width:3.0px;background:#6f8fb3"></div><div class="mm" style="left:976.0px;top:466px;width:4.5px;background:#6f8fb3"></div><div class="mm" style="left:982.0px;top:466px;width:9.0px;background:#a17fa1"></div><div class="mm" style="left:992.5px;top:466px;width:4.5px;background:#b07a7e"></div><div class="mm" style="left:946.0px;top:470px;width:7.5px;background:#8a939d"></div><div class="mm" style="left:955.0px;top:470px;width:6.0px;background:#88a884"></div><div class="mm" style="left:946.0px;top:473px;width:7.5px;background:#c9a070"></div><div class="mm" style="left:955.0px;top:473px;width:15.0px;background:#8a939d"></div><div class="mm" style="left:971.5px;top:473px;width:4.5px;background:#c9a070"></div><div class="mm" style="left:977.5px;top:473px;width:1.5px;background:#6f8fb3"></div><div class="mm" style="left:980.5px;top:473px;width:16.5px;background:#8a939d"></div><div class="mm" style="left:952.0px;top:483px;width:1.5px;background:#8a939d"></div><div class="mm" style="left:955.0px;top:483px;width:12.0px;background:#8a939d"></div><div class="mm" style="left:968.5px;top:483px;width:12.0px;background:#6fa3a3"></div><div class="mm" style="left:982.0px;top:483px;width:15.0px;background:#c9a070"></div><div class="mm" style="left:946.0px;top:487px;width:3.0px;background:#c9a070"></div><div class="mm" style="left:950.5px;top:487px;width:3.0px;background:#8a939d"></div><div class="mm" style="left:955.0px;top:487px;width:3.0px;background:#b07a7e"></div><div class="mm" style="left:959.5px;top:487px;width:7.5px;background:#6fa3a3"></div><div class="mm" style="left:968.5px;top:487px;width:18.0px;background:#8a939d"></div><div class="mm" style="left:988.0px;top:487px;width:7.5px;background:#8a939d"></div><div class="mm" style="left:946.0px;top:490px;width:15.0px;background:#a17fa1"></div><div class="mm" style="left:946.0px;top:493px;width:15.0px;background:#b07a7e"></div><div class="mm" style="left:962.5px;top:493px;width:12.0px;background:#8a939d"></div><div class="mm" style="left:976.0px;top:493px;width:6.0px;background:#a17fa1"></div><div class="mm" style="left:983.5px;top:493px;width:1.5px;background:#c9a070"></div><div class="mm" style="left:940.0px;top:497px;width:7.5px;background:#8a939d"></div><div class="mm" style="left:946.0px;top:500px;width:18.0px;background:#88a884"></div><div class="mm" style="left:965.5px;top:500px;width:4.5px;background:#8a939d"></div><div class="mm" style="left:971.5px;top:500px;width:4.5px;background:#b07a7e"></div><div class="mm" style="left:977.5px;top:500px;width:4.5px;background:#6fa3a3"></div><div class="mm" style="left:983.5px;top:500px;width:7.5px;background:#c9a070"></div><div class="mm" style="left:940.0px;top:504px;width:7.5px;background:#a17fa1"></div><div class="mm" style="left:940.0px;top:507px;width:6.0px;background:#8a939d"></div><div class="mm" style="left:947.5px;top:507px;width:12.0px;background:#6fa3a3"></div><div class="mm" style="left:961.0px;top:507px;width:7.5px;background:#6f8fb3"></div><div class="mm" style="left:970.0px;top:507px;width:7.5px;background:#c9a070"></div><div class="mm" style="left:940.0px;top:514px;width:7.5px;background:#b07a7e"></div><div class="mm" style="left:949.0px;top:514px;width:3.0px;background:#8a939d"></div><div class="mm" style="left:953.5px;top:514px;width:3.0px;background:#6f8fb3"></div><div class="mm" style="left:958.0px;top:514px;width:3.0px;background:#8a939d"></div><div class="mm" style="left:962.5px;top:514px;width:7.5px;background:#c9a070"></div><div class="mm" style="left:971.5px;top:514px;width:4.5px;background:#8a939d"></div><div class="mm" style="left:977.5px;top:514px;width:1.5px;background:#88a884"></div><div class="mm" style="left:940.0px;top:517px;width:7.5px;background:#8a939d"></div><div class="mm" style="left:949.0px;top:517px;width:12.0px;background:#6f8fb3"></div><div class="mm" style="left:962.5px;top:517px;width:3.0px;background:#a17fa1"></div><div class="mm" style="left:967.0px;top:517px;width:3.0px;background:#a17fa1"></div><div class="mm" style="left:971.5px;top:517px;width:9.0px;background:#88a884"></div><div class="mm" style="left:982.0px;top:517px;width:12.0px;background:#8a939d"></div><div class="mm" style="left:995.5px;top:517px;width:1.5px;background:#a17fa1"></div><div class="mm" style="left:946.0px;top:531px;width:4.5px;background:#88a884"></div><div class="mm" style="left:946.0px;top:538px;width:3.0px;background:#6fa3a3"></div><div class="mm" style="left:950.5px;top:538px;width:9.0px;background:#6f8fb3"></div><div class="mm" style="left:961.0px;top:538px;width:3.0px;background:#b07a7e"></div><div class="mm" style="left:965.5px;top:538px;width:12.0px;background:#8a939d"></div><div class="mm" style="left:979.0px;top:538px;width:4.5px;background:#8a939d"></div><div class="mm" style="left:985.0px;top:538px;width:3.0px;background:#c9a070"></div><div class="mm" style="left:989.5px;top:538px;width:7.5px;background:#8a939d"></div><div class="mm" style="left:952.0px;top:544px;width:3.0px;background:#a17fa1"></div><div class="mm" style="left:956.5px;top:544px;width:7.5px;background:#6fa3a3"></div><div class="mm" style="left:965.5px;top:544px;width:13.5px;background:#88a884"></div><div class="mm" style="left:952.0px;top:551px;width:4.5px;background:#8a939d"></div><div class="mm" style="left:958.0px;top:551px;width:9.0px;background:#6fa3a3"></div><div class="mm" style="left:968.5px;top:551px;width:3.0px;background:#8a939d"></div><div class="mm" style="left:973.0px;top:551px;width:6.0px;background:#8a939d"></div><div class="mm" style="left:952.0px;top:555px;width:15.0px;background:#6fa3a3"></div><div class="mm" style="left:952.0px;top:558px;width:4.5px;background:#a17fa1"></div><div class="mm" style="left:958.0px;top:558px;width:9.0px;background:#b07a7e"></div><div class="mm" style="left:946.0px;top:561px;width:6.0px;background:#b07a7e"></div><div class="mm" style="left:940.0px;top:565px;width:6.0px;background:#8a939d"></div><div class="mm" style="left:947.5px;top:565px;width:6.0px;background:#8a939d"></div><div class="mm" style="left:955.0px;top:565px;width:3.0px;background:#b07a7e"></div><div class="mm" style="left:959.5px;top:565px;width:7.5px;background:#c9a070"></div><div class="mm" style="left:968.5px;top:565px;width:4.5px;background:#8a939d"></div><div class="mm" style="left:946.0px;top:568px;width:4.5px;background:#c9a070"></div><div class="mm" style="left:946.0px;top:572px;width:1.5px;background:#6fa3a3"></div><div class="mm" style="left:949.0px;top:572px;width:18.0px;background:#8a939d"></div><div class="mm" style="left:968.5px;top:572px;width:6.0px;background:#8a939d"></div><div class="mm" style="left:976.0px;top:572px;width:9.0px;background:#c9a070"></div><div class="mm" style="left:986.5px;top:572px;width:10.5px;background:#b07a7e"></div><div class="mm" style="left:946.0px;top:575px;width:9.0px;background:#8a939d"></div><div class="mm" style="left:956.5px;top:575px;width:7.5px;background:#8a939d"></div><div class="mm" style="left:965.5px;top:575px;width:18.0px;background:#88a884"></div><div class="mm" style="left:985.0px;top:575px;width:6.0px;background:#88a884"></div><div class="mm" style="left:946.0px;top:578px;width:6.0px;background:#8a939d"></div><div class="mm" style="left:953.5px;top:578px;width:1.5px;background:#b07a7e"></div><div class="mm" style="left:956.5px;top:578px;width:4.5px;background:#a17fa1"></div><div class="mm" style="left:952.0px;top:582px;width:7.5px;background:#88a884"></div><div class="mm" style="left:961.0px;top:582px;width:15.0px;background:#6f8fb3"></div><div class="mm" style="left:977.5px;top:582px;width:18.0px;background:#6fa3a3"></div><div class="mm" style="left:946.0px;top:585px;width:7.5px;background:#8a939d"></div><div class="mm" style="left:952.0px;top:589px;width:9.0px;background:#8a939d"></div><div class="mm" style="left:962.5px;top:589px;width:6.0px;background:#6fa3a3"></div><div class="mm" style="left:970.0px;top:589px;width:1.5px;background:#b07a7e"></div><div class="mm" style="left:973.0px;top:589px;width:3.0px;background:#8a939d"></div><div class="mm" style="left:977.5px;top:589px;width:4.5px;background:#8a939d"></div><div class="mm" style="left:983.5px;top:589px;width:1.5px;background:#8a939d"></div><div class="mm" style="left:952.0px;top:592px;width:3.0px;background:#88a884"></div><div class="mm" style="left:956.5px;top:592px;width:12.0px;background:#8a939d"></div><div class="mm" style="left:970.0px;top:592px;width:7.5px;background:#8a939d"></div><div class="mm" style="left:979.0px;top:592px;width:6.0px;background:#8a939d"></div><div class="mm" style="left:986.5px;top:592px;width:3.0px;background:#6fa3a3"></div><div class="mm" style="left:991.0px;top:592px;width:6.0px;background:#88a884"></div><div class="mm" style="left:952.0px;top:595px;width:3.0px;background:#6f8fb3"></div><div class="mm" style="left:956.5px;top:595px;width:18.0px;background:#c9a070"></div><div class="mm" style="left:976.0px;top:595px;width:18.0px;background:#b07a7e"></div><div class="mm" style="left:995.5px;top:595px;width:1.5px;background:#a17fa1"></div><div class="mm" style="left:946.0px;top:599px;width:7.5px;background:#8a939d"></div><div class="mm" style="left:946.0px;top:602px;width:3.0px;background:#8a939d"></div><div class="mm" style="left:950.5px;top:602px;width:7.5px;background:#b07a7e"></div><div class="mm" style="left:952.0px;top:606px;width:7.5px;background:#6fa3a3"></div><div class="mm" style="left:961.0px;top:606px;width:3.0px;background:#8a939d"></div><div class="mm" style="left:965.5px;top:606px;width:15.0px;background:#c9a070"></div><div class="mm" style="left:982.0px;top:606px;width:3.0px;background:#8a939d"></div><div class="mm" style="left:952.0px;top:609px;width:6.0px;background:#8a939d"></div><div class="mm" style="left:959.5px;top:609px;width:9.0px;background:#8a939d"></div><div class="mm" style="left:970.0px;top:609px;width:3.0px;background:#6fa3a3"></div><div class="mm" style="left:974.5px;top:609px;width:9.0px;background:#8a939d"></div><div class="mm" style="left:985.0px;top:609px;width:4.5px;background:#8a939d"></div><div class="mm" style="left:946.0px;top:612px;width:1.5px;background:#a17fa1"></div><div class="mm" style="left:949.0px;top:612px;width:6.0px;background:#88a884"></div><div class="mm" style="left:956.5px;top:612px;width:12.0px;background:#8a939d"></div><div class="mm" style="left:970.0px;top:612px;width:3.0px;background:#88a884"></div><div class="mm" style="left:946.0px;top:616px;width:7.5px;background:#b07a7e"></div><div class="mm" style="left:940.0px;top:619px;width:15.0px;background:#6fa3a3"></div><div class="mm" style="left:940.0px;top:623px;width:4.5px;background:#88a884"></div><div class="mm" style="left:946.0px;top:626px;width:18.0px;background:#b07a7e"></div><div class="mm" style="left:965.5px;top:626px;width:6.0px;background:#8a939d"></div><div class="mm" style="left:973.0px;top:626px;width:9.0px;background:#c9a070"></div><div class="mm" style="left:983.5px;top:626px;width:7.5px;background:#8a939d"></div><div class="mm" style="left:992.5px;top:626px;width:4.5px;background:#6fa3a3"></div><div class="mm" style="left:946.0px;top:629px;width:3.0px;background:#c9a070"></div><div class="mm" style="left:950.5px;top:629px;width:12.0px;background:#6f8fb3"></div><div class="mm" style="left:964.0px;top:629px;width:3.0px;background:#a17fa1"></div></div>
<div class="a" style="left:941.5px;top:297px;width:17px;height:2px;background:#8fd6d2"></div>
<div class="a" style="left:954px;top:401px;width:16px;height:2px;background:#8fd6d2"></div>
</div>
<div id="sidebar">
<div class="a" style="left:0;top:0;width:1.5px;height:669px;background:#1a1d21"></div>
<div class="t" style="left:18px;top:15.5px;font-size:13.5px;font-weight:bold;color:#b4b7bb">OPEN FILES</div>
<div class="a" style="left:0;top:38px;width:433px;height:27px;background:#4a4c50"></div>
<svg class="a" style="left:17.7px;top:46.6px" width="9" height="9"><path d="M1 1 L8.2 8.2 M8.2 1 L1 8.2" stroke="#96999e" stroke-width="1.8" fill="none"/></svg>
<div class="sb" style="left:32.5px;top:41.7px">sbnf.rs</div>
<svg class="a" style="left:17.7px;top:73.6px" width="9" height="9"><path d="M1 1 L8.2 8.2 M8.2 1 L1 8.2" stroke="#96999e" stroke-width="1.8" fill="none"/></svg>
<div class="sb" style="left:32.5px;top:68.7px">sublime_syntax.rs</div>
<svg class="a" style="left:17.7px;top:100.6px" width="9" height="9"><path d="M1 1 L8.2 8.2 M8.2 1 L1 8.2" stroke="#96999e" stroke-width="1.8" fill="none"/></svg>
<div class="sb" style="left:32.5px;top:95.7px">symbol_table.rs</div>
<div class="t" style="left:18px;top:150.5px;font-size:13.5px;font-weight:bold;color:#b4b7bb">FOLDERS</div>
<svg class="a" style="left:16.9px;top:182.5px" width="10" height="7"><path d="M0 0 H9.5 L4.75 6.5Z" fill="#6c6f74"/></svg>
<svg class="a" style="left:32.0px;top:180.0px" width="20" height="14"><path d="M0.5 1.5 Q0.5 0.5 1.5 0.5 H6 L7.5 2.5 H15 Q16 2.5 16 3.5 V5 H3.5 Z" fill="#6c6f74"/><path d="M3 6 H19.5 L16.5 13.5 H0.5 Z" fill="#6c6f74"/><path d="M0.5 2 V13" stroke="#6c6f74" stroke-width="1.2"/></svg>
<div class="sb" style="left:57.5px;top:176.7px;color:#d6d8db">sbnf</div>
<svg class="a" style="left:32.0px;top:208.5px" width="8" height="10"><path d="M0 0.5 L7.5 5 L0 9.5Z" fill="#6c6f74"/></svg>
<svg class="a" style="left:45.7px;top:207.0px" width="18" height="14"><path d="M0.5 1.5 Q0.5 0.5 1.5 0.5 H6 L7.5 2.5 H16 Q17 2.5 17 3.5 V12.5 Q17 13.5 16 13.5 H1.5 Q0.5 13.5 0.5 12.5Z" fill="#6c6f74"/></svg>
<div class="sb" style="left:71.0px;top:203.7px;color:#d6d8db">.github</div>
<svg class="a" style="left:32.0px;top:235.5px" width="8" height="10"><path d="M0 0.5 L7.5 5 L0 9.5Z" fill="#6c6f74"/></svg>
<svg class="a" style="left:45.7px;top:234.0px" width="18" height="14"><path d="M0.5 1.5 Q0.5 0.5 1.5 0.5 H6 L7.5 2.5 H16 Q17 2.5 17 3.5 V12.5 Q17 13.5 16 13.5 H1.5 Q0.5 13.5 0.5 12.5Z" fill="#6c6f74"/></svg>
<div class="sb" style="left:71.0px;top:230.7px;color:#d6d8db">cli</div>
<svg class="a" style="left:32.0px;top:262.5px" width="8" height="10"><path d="M0 0.5 L7.5 5 L0 9.5Z" fill="#6c6f74"/></svg>
<svg class="a" style="left:45.7px;top:261.0px" width="18" height="14"><path d="M0.5 1.5 Q0.5 0.5 1.5 0.5 H6 L7.5 2.5 H16 Q17 2.5 17 3.5 V12.5 Q17 13.5 16 13.5 H1.5 Q0.5 13.5 0.5 12.5Z" fill="#6c6f74"/></svg>
<div class="sb" style="left:71.0px;top:257.7px;color:#d6d8db">docs</div>
<svg class="a" style="left:32.0px;top:289.5px" width="8" height="10"><path d="M0 0.5 L7.5 5 L0 9.5Z" fill="#6c6f74"/></svg>
<svg class="a" style="left:45.7px;top:288.0px" width="18" height="14"><path d="M0.5 1.5 Q0.5 0.5 1.5 0.5 H6 L7.5 2.5 H16 Q17 2.5 17 3.5 V12.5 Q17 13.5 16 13.5 H1.5 Q0.5 13.5 0.5 12.5Z" fill="#6c6f74"/></svg>
<div class="sb" style="left:71.0px;top:284.7px;color:#d6d8db">fuzz</div>
<svg class="a" style="left:32.0px;top:316.5px" width="8" height="10"><path d="M0 0.5 L7.5 5 L0 9.5Z" fill="#6c6f74"/></svg>
<svg class="a" style="left:45.7px;top:315.0px" width="18" height="14"><path d="M0.5 1.5 Q0.5 0.5 1.5 0.5 H6 L7.5 2.5 H16 Q17 2.5 17 3.5 V12.5 Q17 13.5 16 13.5 H1.5 Q0.5 13.5 0.5 12.5Z" fill="#6c6f74"/></svg>
<div class="sb" style="left:71.0px;top:311.7px;color:#d6d8db">gh-pages</div>
<svg class="a" style="left:32.0px;top:343.5px" width="8" height="10"><path d="M0 0.5 L7.5 5 L0 9.5Z" fill="#6c6f74"/></svg>
<svg class="a" style="left:45.7px;top:342.0px" width="18" height="14"><path d="M0.5 1.5 Q0.5 0.5 1.5 0.5 H6 L7.5 2.5 H16 Q17 2.5 17 3.5 V12.5 Q17 13.5 16 13.5 H1.5 Q0.5 13.5 0.5 12.5Z" fill="#6c6f74"/></svg>
<div class="sb" style="left:71.0px;top:338.7px;color:#d6d8db">package_control</div>
<svg class="a" style="left:32.0px;top:370.5px" width="8" height="10"><path d="M0 0.5 L7.5 5 L0 9.5Z" fill="#6c6f74"/></svg>
<svg class="a" style="left:45.7px;top:369.0px" width="18" height="14"><path d="M0.5 1.5 Q0.5 0.5 1.5 0.5 H6 L7.5 2.5 H16 Q17 2.5 17 3.5 V12.5 Q17 13.5 16 13.5 H1.5 Q0.5 13.5 0.5 12.5Z" fill="#6c6f74"/></svg>
<div class="sb" style="left:71.0px;top:365.7px;color:#d6d8db">regexp</div>
<svg class="a" style="left:32.0px;top:397.5px" width="8" height="10"><path d="M0 0.5 L7.5 5 L0 9.5Z" fill="#6c6f74"/></svg>
<svg class="a" style="left:45.7px;top:396.0px" width="18" height="14"><path d="M0.5 1.5 Q0.5 0.5 1.5 0.5 H6 L7.5 2.5 H16 Q17 2.5 17 3.5 V12.5 Q17 13.5 16 13.5 H1.5 Q0.5 13.5 0.5 12.5Z" fill="#6c6f74"/></svg>
<div class="sb" style="left:71.0px;top:392.7px;color:#d6d8db">sbnf</div>
<svg class="a" style="left:32.0px;top:424.5px" width="8" height="10"><path d="M0 0.5 L7.5 5 L0 9.5Z" fill="#6c6f74"/></svg>
<svg class="a" style="left:45.7px;top:423.0px" width="18" height="14"><path d="M0.5 1.5 Q0.5 0.5 1.5 0.5 H6 L7.5 2.5 H16 Q17 2.5 17 3.5 V12.5 Q17 13.5 16 13.5 H1.5 Q0.5 13.5 0.5 12.5Z" fill="#6c6f74"/></svg>
<div class="sb" style="left:71.0px;top:419.7px;color:#d6d8db">simplec</div>
<svg class="a" style="left:31.1px;top:452.5px" width="10" height="7"><path d="M0 0 H9.5 L4.75 6.5Z" fill="#6c6f74"/></svg>
<svg class="a" style="left:46.2px;top:450.0px" width="20" height="14"><path d="M0.5 1.5 Q0.5 0.5 1.5 0.5 H6 L7.5 2.5 H15 Q16 2.5 16 3.5 V5 H3.5 Z" fill="#6c6f74"/><path d="M3 6 H19.5 L16.5 13.5 H0.5 Z" fill="#6c6f74"/><path d="M0.5 2 V13" stroke="#6c6f74" stroke-width="1.2"/></svg>
<div class="sb" style="left:71.7px;top:446.7px;color:#d6d8db">src</div>
<svg class="a" style="left:46.2px;top:478.5px" width="8" height="10"><path d="M0 0.5 L7.5 5 L0 9.5Z" fill="#6c6f74"/></svg>
<svg class="a" style="left:59.9px;top:477.0px" width="18" height="14"><path d="M0.5 1.5 Q0.5 0.5 1.5 0.5 H6 L7.5 2.5 H16 Q17 2.5 17 3.5 V12.5 Q17 13.5 16 13.5 H1.5 Q0.5 13.5 0.5 12.5Z" fill="#6c6f74"/></svg>
<div class="sb" style="left:85.2px;top:473.7px;color:#d6d8db">compiler</div>
<svg class="a" style="left:60.4px;top:503px" width="16" height="14"><path d="M1.2 12.5 L6.6 3.2" stroke="#9a9da2" stroke-width="1.3" fill="none"/><path d="M11.4 5.6 V12.4 M8.5 7.3 L14.3 10.7 M14.3 7.3 L8.5 10.7" stroke="#9a9da2" stroke-width="1.3" fill="none"/></svg>
<div class="sb" style="left:85.2px;top:500.7px;color:#d6d8db">lib.rs</div>
<div class="a" style="left:0;top:524px;width:433px;height:27px;background:#4a4c50"></div>
<svg class="a" style="left:60.4px;top:530px" width="16" height="14"><path d="M1.2 12.5 L6.6 3.2" stroke="#9a9da2" stroke-width="1.3" fill="none"/><path d="M11.4 5.6 V12.4 M8.5 7.3 L14.3 10.7 M14.3 7.3 L8.5 10.7" stroke="#9a9da2" stroke-width="1.3" fill="none"/></svg>
<div class="sb" style="left:85.2px;top:527.7px;color:#d6d8db">sbnf.rs</div>
<svg class="a" style="left:60.4px;top:557px" width="16" height="14"><path d="M1.2 12.5 L6.6 3.2" stroke="#9a9da2" stroke-width="1.3" fill="none"/><path d="M11.4 5.6 V12.4 M8.5 7.3 L14.3 10.7 M14.3 7.3 L8.5 10.7" stroke="#9a9da2" stroke-width="1.3" fill="none"/></svg>
<div class="sb" style="left:85.2px;top:554.7px;color:#d6d8db">sublime_syntax.rs</div>
<svg class="a" style="left:60.4px;top:584px" width="16" height="14"><path d="M1.2 12.5 L6.6 3.2" stroke="#9a9da2" stroke-width="1.3" fill="none"/><path d="M11.4 5.6 V12.4 M8.5 7.3 L14.3 10.7 M14.3 7.3 L8.5 10.7" stroke="#9a9da2" stroke-width="1.3" fill="none"/></svg>
<div class="sb" style="left:85.2px;top:581.7px;color:#d6d8db">symbol_table.rs</div>
<svg class="a" style="left:60.4px;top:611px" width="16" height="14"><path d="M1.2 12.5 L6.6 3.2" stroke="#9a9da2" stroke-width="1.3" fill="none"/><path d="M11.4 5.6 V12.4 M8.5 7.3 L14.3 10.7 M14.3 7.3 L8.5 10.7" stroke="#9a9da2" stroke-width="1.3" fill="none"/></svg>
<div class="sb" style="left:85.2px;top:608.7px;color:#d6d8db">util.rs</div>
<svg class="a" style="left:32.0px;top:640.5px" width="8" height="10"><path d="M0 0.5 L7.5 5 L0 9.5Z" fill="#6c6f74"/></svg>
<svg class="a" style="left:45.7px;top:639.0px" width="18" height="14"><path d="M0.5 1.5 Q0.5 0.5 1.5 0.5 H6 L7.5 2.5 H16 Q17 2.5 17 3.5 V12.5 Q17 13.5 16 13.5 H1.5 Q0.5 13.5 0.5 12.5Z" fill="#6c6f74"/></svg>
<div class="sb" style="left:71.0px;top:635.7px;color:#a3a6aa">target</div>
<svg class="a" style="left:32.0px;top:667.5px" width="8" height="10"><path d="M0 0.5 L7.5 5 L0 9.5Z" fill="#6c6f74"/></svg>
<svg class="a" style="left:45.7px;top:666.0px" width="18" height="14"><path d="M0.5 1.5 Q0.5 0.5 1.5 0.5 H6 L7.5 2.5 H16 Q17 2.5 17 3.5 V12.5 Q17 13.5 16 13.5 H1.5 Q0.5 13.5 0.5 12.5Z" fill="#6c6f74"/></svg>
<div class="sb" style="left:71.0px;top:662.7px;color:#a3a6aa">tests</div>
<svg class="a" style="left:406.70000000000005px;top:180.7px" width="12" height="12"><circle cx="6" cy="6" r="4.5" stroke="#8b8e93" stroke-width="1.4" fill="none"/></svg>
</div>
<div id="status">
<div class="a" style="left:0;top:0;width:1440px;height:2px;background:#181b1e"></div>
<div class="t" style="left:18px;top:3px;letter-spacing:-0.18px">16 characters selected</div>
<svg class="a" style="left:958px;top:5px" width="11" height="15"><circle cx="2.5" cy="2.5" r="1.8" fill="#b9bcc0"/><circle cx="8.5" cy="3" r="1.8" fill="#b9bcc0"/><circle cx="2.5" cy="12.5" r="1.8" fill="#b9bcc0"/><path d="M2.5 2.5 V12.5 M8.5 3 Q8.5 7 2.5 9" stroke="#b9bcc0" stroke-width="1.3" fill="none"/></svg>
<div class="t" style="left:974px;top:3px">master</div>
<div class="a" style="left:1017.5px;top:5px;width:12.5px;height:15px;border:1.4px solid #9ea1a6;border-radius:2.5px"></div>
<div class="t" style="left:1020.5px;top:3px;font-size:11px;color:#c4c7cb">1</div>
<div class="t" style="left:1061px;top:3px">7 misspelled words</div>
<div class="t" style="left:1214px;top:3px;letter-spacing:-0.35px">Spaces: 4</div>
<div class="t" style="left:1339.5px;top:3px">Rust</div>
<svg class="a" style="left:1411.5px;top:5.5px" width="17" height="14"><rect x="0.8" y="0.8" width="15" height="12" rx="1.5" stroke="#a9acb0" stroke-width="1.5" fill="none"/><rect x="10.5" y="0.8" width="5.3" height="12" fill="#a9acb0"/></svg>
</div>
</body></html>
